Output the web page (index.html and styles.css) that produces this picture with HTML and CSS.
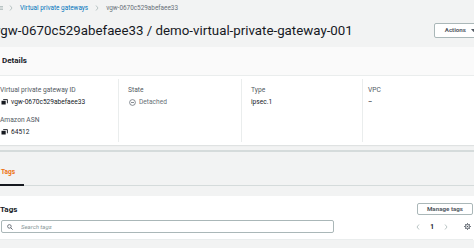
FILE: index.html
```html
<!DOCTYPE html>
<html lang="en">
<head>
  <meta charset="UTF-8">
  <title>vgw-0670c529abefaee33</title>
  <link rel="stylesheet" href="styles.css">
</head>
<body>
  <!-- Breadcrumbs -->
  <nav class="crumbs">
    <svg class="crumb-home" width="6" height="6" viewBox="0 0 6 6"><path d="M0 1.5h6M0 3h6M0 4.5h6" stroke="#aab7b8" stroke-width="0.8"/></svg>
    <svg class="chev" width="4" height="6" viewBox="0 0 4 6"><path d="M1 0.5l2 2.5-2 2.5" fill="none" stroke="#aab7b8" stroke-width="0.8"/></svg>
    <a class="crumb-link" href="#">Virtual private gateways</a>
    <svg class="chev" width="4" height="6" viewBox="0 0 4 6"><path d="M1 0.5l2 2.5-2 2.5" fill="none" stroke="#aab7b8" stroke-width="0.8"/></svg>
    <span class="crumb-current">vgw-0670c529abefaee33</span>
  </nav>

  <!-- Page header -->
  <header class="page-head">
    <h1>vgw-0670c529abefaee33 / demo-virtual-private-gateway-001</h1>
    <button class="btn btn-actions">Actions
      <svg width="5" height="3" viewBox="0 0 5 3"><path d="M0 0h5L2.5 3z" fill="#545b64"/></svg>
    </button>
  </header>

  <!-- Details panel -->
  <section class="panel details">
    <h2 class="panel-title">Details</h2>
    <div class="cols">
      <div class="col">
        <div class="kv">
          <div class="label">Virtual private gateway ID</div>
          <div class="value"><svg class="icon" width="7" height="6" viewBox="0 0 7 6"><rect x="0.5" y="1.8" width="4.2" height="3.7" fill="#16191f"/><path d="M2.2 0.6h4.2v3.7" fill="none" stroke="#16191f" stroke-width="0.9"/></svg>vgw-0670c529abefaee33</div>
        </div>
        <div class="kv">
          <div class="label">Amazon ASN</div>
          <div class="value"><svg class="icon" width="7" height="6" viewBox="0 0 7 6"><rect x="0.5" y="1.8" width="4.2" height="3.7" fill="#16191f"/><path d="M2.2 0.6h4.2v3.7" fill="none" stroke="#16191f" stroke-width="0.9"/></svg>64512</div>
        </div>
      </div>
      <div class="col">
        <div class="kv">
          <div class="label">State</div>
          <div class="value status"><svg class="icon" width="7" height="7" viewBox="0 0 7 7"><circle cx="3.5" cy="3.5" r="2.9" fill="none" stroke="#687078" stroke-width="0.8"/><path d="M2 3.5h3" stroke="#687078" stroke-width="0.8"/></svg>Detached</div>
        </div>
      </div>
      <div class="col">
        <div class="kv">
          <div class="label">Type</div>
          <div class="value">ipsec.1</div>
        </div>
      </div>
      <div class="col">
        <div class="kv">
          <div class="label">VPC</div>
          <div class="value">–</div>
        </div>
      </div>
    </div>
  </section>

  <!-- Tabs -->
  <div class="tabs">
    <span class="tab active">Tags</span>
  </div>

  <!-- Tags panel -->
  <section class="panel tags">
    <div class="tags-head">
      <h2 class="panel-title">Tags</h2>
      <button class="btn">Manage tags</button>
    </div>
    <div class="tags-tools">
      <label class="search">
        <svg width="6" height="6" viewBox="0 0 6 6"><circle cx="2.4" cy="2.4" r="1.8" fill="none" stroke="#545b64" stroke-width="0.8"/><path d="M3.7 3.7L5.6 5.6" stroke="#545b64" stroke-width="0.9"/></svg>
        <input type="text" placeholder="Search tags">
      </label>
      <div class="pager">
        <svg width="4" height="6" viewBox="0 0 4 6"><path d="M3 0.5L1 3l2 2.5" fill="none" stroke="#aab7b8" stroke-width="0.8"/></svg>
        <span class="page-num">1</span>
        <svg width="4" height="6" viewBox="0 0 4 6"><path d="M1 0.5l2 2.5-2 2.5" fill="none" stroke="#aab7b8" stroke-width="0.8"/></svg>
        <svg class="gear" width="7" height="7" viewBox="0 0 7 7"><circle cx="3.5" cy="3.5" r="2.1" fill="none" stroke="#545b64" stroke-width="0.9"/><circle cx="3.5" cy="3.5" r="0.8" fill="#545b64"/><path d="M3.5 0v1.2M3.5 5.8V7M0 3.5h1.2M5.8 3.5H7M1 1l.9.9M5.1 5.1l.9.9M6 1l-.9.9M1.9 5.1L1 6" stroke="#545b64" stroke-width="0.8"/></svg>
      </div>
    </div>
  </section>
</body>
</html>
```

FILE: styles.css
```css
/* General Styling */
body {
  margin: 0;
  width: 474px;
  height: 248px;
  overflow: hidden;
  background: #f2f3f3;
  font-family: Roboto, "Liberation Sans", sans-serif;
  color: #16191f;
}

/* Breadcrumbs */
.crumbs {
  display: flex;
  align-items: center;
  gap: 7px;
  height: 15px;
  font-size: 6.4px;
}

.crumb-home {
  margin-left: -3px;
  margin-right: -1px;
}

.crumb-link {
  color: #0073bb;
  text-decoration: none;
}

.crumb-current {
  color: #687078;
}

/* Page header */
.page-head {
  display: flex;
  justify-content: space-between;
  align-items: center;
  height: 30px;
  padding-bottom: 2px;
}

.page-head h1 {
  margin: 0 0 0 -6px;
  font-size: 13.3px;
  font-weight: 400;
  white-space: nowrap;
}

/* Buttons */
.btn {
  display: flex;
  align-items: center;
  gap: 5px;
  height: 15px;
  padding: 0 9px;
  font-family: inherit;
  font-size: 6.2px;
  font-weight: 700;
  color: #545b64;
  background: #fff;
  border: 1px solid #aab7b8;
  border-radius: 2px;
}

.btn-actions {
  margin-right: -12px;
  padding-left: 10px;
}

/* Panels */
.panel {
  margin-left: -6px;
  background: #fff;
}

.panel-title {
  margin: 0;
  font-size: 8px;
  font-weight: 700;
}

.details {
  margin-bottom: 5px;
  box-shadow: 0 1px 1px rgba(0, 22, 22, 0.08);
}

.details .panel-title {
  height: 28px;
  line-height: 28px;
  padding-left: 8px;
  background: #fafafa;
  border-bottom: 1px solid #eaeded;
}

.cols {
  display: grid;
  grid-template-columns: 127px 123px 121px 1fr;
  margin-left: -3px;
  padding: 3px 0;
}

.col {
  padding: 5px 0 4px 9px;
  border-left: 1px solid #eaeded;
}

.col:first-child {
  border-left: none;
}

.col:last-child {
  padding-left: 5px;
}

.kv + .kv {
  margin-top: 6px;
}

.label {
  font-size: 6.7px;
  line-height: 12px;
  color: #545b64;
}

.value {
  display: flex;
  align-items: center;
  gap: 3px;
  font-size: 6.6px;
  line-height: 12px;
}

.value .icon {
  margin-left: 1px;
}

.status {
  color: #687078;
}

/* Tabs */
.tabs {
  display: flex;
  margin-left: -6px;
  border-top: 2px solid #d5dbdb;
  border-bottom: 1px solid #d5dbdb;
}

.tab {
  padding: 8px 9px 0 7px;
  line-height: 24px;
  font-size: 6.5px;
  font-weight: 700;
  margin-bottom: -1px;
}

.tab.active {
  color: #ec7211;
  border-bottom: 2px solid #16191f;
}

/* Tags panel */
.tags {
  margin-top: 10px;
  padding: 0 1px 0 6px;
}

.tags-head {
  display: flex;
  justify-content: space-between;
  align-items: center;
  padding-top: 7px;
  height: 12px;
}

.tags-head .btn {
  height: 12px;
  padding: 0 9px;
}

.tags-tools {
  display: flex;
  align-items: center;
  margin-top: 5px;
  padding-bottom: 6px;
  border-bottom: 1px solid #eaeded;
}

.search {
  display: flex;
  align-items: center;
  gap: 8px;
  width: 333px;
  height: 13px;
  padding-left: 5px;
  box-sizing: border-box;
  margin-left: 1px;
  background: #fff;
  border: 1px solid #aab7b8;
  border-radius: 2px;
}

.search input {
  flex: 1;
  min-width: 0;
  border: none;
  padding: 0;
  outline: none;
  font-family: inherit;
  font-size: 6px;
  font-style: italic;
  background: transparent;
}

.search input::placeholder {
  color: #879596;
}

.pager {
  display: flex;
  align-items: center;
  gap: 10px;
  margin-left: auto;
  padding-right: 2px;
}

.page-num {
  font-size: 6.5px;
  font-weight: 700;
}

.gear {
  margin-left: 6px;
}
```
